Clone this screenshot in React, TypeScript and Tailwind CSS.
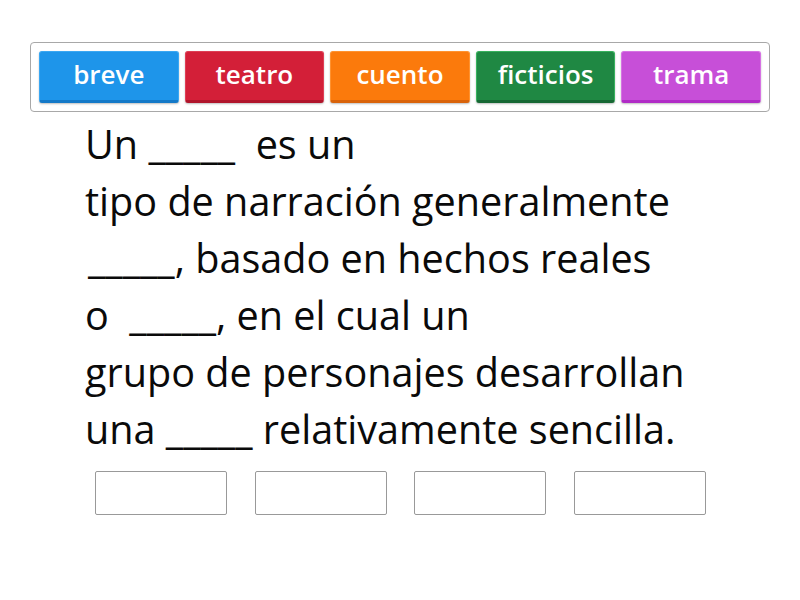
const tiles = [
  { label: "breve", cls: "bg-[#1e95ea] border-[#3aa7f2] border-b-[#1479c8]" },
  { label: "teatro", cls: "bg-[#d31f38] border-[#de3e54] border-b-[#b0152b]" },
  { label: "cuento", cls: "bg-[#fb7a0c] border-[#ff922f] border-b-[#d9630a]" },
  { label: "ficticios", cls: "bg-[#1f8843] border-[#37b25d] border-b-[#176834]" },
  { label: "trama", cls: "bg-[#c74fd8] border-[#d673e3] border-b-[#b02bc6]" },
]

const lines = [
  "Un _____  es un",
  "tipo de narración generalmente",
  " _____, basado en hechos reales",
  "o  _____, en el cual un",
  "grupo de personajes desarrollan",
  "una _____ relativamente sencilla.",
]

export default function App() {
  return (
    <div className="w-[800px] h-[600px] bg-white pt-[42px] font-['Open_Sans',sans-serif]">
      <div className="mx-[30px] border border-[#a8a8a8] rounded-[4px] px-[8px] py-[8px] flex gap-[6px]">
        {tiles.map((t) => (
          <div
            key={t.label}
            className={`w-[140px] h-[52px] rounded-[3px] border border-b-[3px] flex items-center justify-center text-white font-semibold text-[26px] shadow-[0_1px_2px_rgba(0,0,0,0.25)] ${t.cls}`}
          >
            <span className="-mt-[3px]">{t.label}</span>
          </div>
        ))}
      </div>

      <div className="pl-[85px] pt-[4px] text-[39.6px] leading-[57px] text-[#0a0a0a]">
        {lines.map((l, i) => (
          <div key={i} className="whitespace-pre">{l.trimStart() === l ? l : <span className="pl-[3px]">{l.trimStart()}</span>}</div>
        ))}
      </div>

      <div className="flex gap-[27.5px] pl-[95px] pt-[13px]">
        {[0, 1, 2, 3].map((i) => (
          <div key={i} className="w-[132px] h-[44px] border border-[#999] rounded-[2px] bg-white" />
        ))}
      </div>
    </div>
  )
}
